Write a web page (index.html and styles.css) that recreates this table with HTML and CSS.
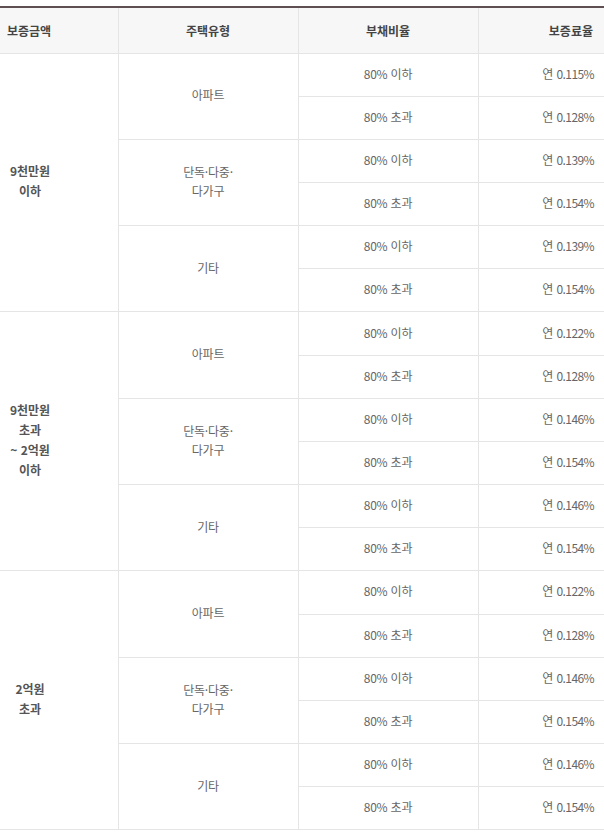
FILE: index.html
```html
<!DOCTYPE html>
<html lang="ko">
<head>
<meta charset="utf-8">
<link rel="stylesheet" href="styles.css">
</head>
<body>
<table class="rate">
  <colgroup>
    <col class="c1"><col class="c2"><col class="c3"><col class="c4">
  </colgroup>
  <thead>
    <tr>
      <th class="left">보증금액</th>
      <th>주택유형</th>
      <th>부채비율</th>
      <th class="right">보증료율</th>
    </tr>
  </thead>
  <tbody>
    <tr>
      <td class="amount" rowspan="6"><span class="amt">9천만원<br>이하</span></td>
      <td class="type" rowspan="2">아파트</td>
      <td>80% 이하</td><td class="right">연 0.115%</td>
    </tr>
    <tr><td>80% 초과</td><td class="right">연 0.128%</td></tr>
    <tr>
      <td class="type" rowspan="2">단독·다중·<br>다가구</td>
      <td>80% 이하</td><td class="right">연 0.139%</td>
    </tr>
    <tr><td>80% 초과</td><td class="right">연 0.154%</td></tr>
    <tr>
      <td class="type" rowspan="2">기타</td>
      <td>80% 이하</td><td class="right">연 0.139%</td>
    </tr>
    <tr><td>80% 초과</td><td class="right">연 0.154%</td></tr>

    <tr>
      <td class="amount" rowspan="6"><span class="amt">9천만원<br>초과<br>~ 2억원<br>이하</span></td>
      <td class="type" rowspan="2">아파트</td>
      <td>80% 이하</td><td class="right">연 0.122%</td>
    </tr>
    <tr><td>80% 초과</td><td class="right">연 0.128%</td></tr>
    <tr>
      <td class="type" rowspan="2">단독·다중·<br>다가구</td>
      <td>80% 이하</td><td class="right">연 0.146%</td>
    </tr>
    <tr><td>80% 초과</td><td class="right">연 0.154%</td></tr>
    <tr>
      <td class="type" rowspan="2">기타</td>
      <td>80% 이하</td><td class="right">연 0.146%</td>
    </tr>
    <tr><td>80% 초과</td><td class="right">연 0.154%</td></tr>

    <tr>
      <td class="amount" rowspan="6"><span class="amt">2억원<br>초과</span></td>
      <td class="type" rowspan="2">아파트</td>
      <td>80% 이하</td><td class="right">연 0.122%</td>
    </tr>
    <tr><td>80% 초과</td><td class="right">연 0.128%</td></tr>
    <tr>
      <td class="type" rowspan="2">단독·다중·<br>다가구</td>
      <td>80% 이하</td><td class="right">연 0.146%</td>
    </tr>
    <tr><td>80% 초과</td><td class="right">연 0.154%</td></tr>
    <tr>
      <td class="type" rowspan="2">기타</td>
      <td>80% 이하</td><td class="right">연 0.146%</td>
    </tr>
    <tr><td>80% 초과</td><td class="right">연 0.154%</td></tr>
  </tbody>
</table>
</body>
</html>
```

FILE: styles.css
```css
html, body {
  margin: 0;
  padding: 0;
  background: #fff;
}
body {
  font-family: "Noto Sans CJK KR", "Noto Sans", sans-serif;
  font-size: 12px;
  color: #666;
}
.rate {
  width: 604px;
  margin-top: 6px;
  border-collapse: collapse;
  table-layout: fixed;
  border-top: 2px solid #5e4f52;
}
.c1 { width: 118px; }
.c2 { width: 180px; }
.c3 { width: 180px; }
.c4 { width: 126px; }

.rate thead tr { height: 46px; }
.rate th {
  padding: 0 10px;
  background: #f7f7f7;
  color: #444;
  font-weight: bold;
  font-size: 12px;
  text-align: center;
  border-bottom: 1px solid #e5e5e5;
  border-left: 1px solid #e5e5e5;
}
.rate th:first-child { border-left: none; }
.rate th.left { text-align: left; padding-left: 7px; }

.rate tbody tr { height: 43.17px; }
.rate td {
  padding: 0 10px 3px;
  text-align: center;
  vertical-align: middle;
  border-bottom: 1px solid #e5e5e5;
  border-left: 1px solid #e5e5e5;
  line-height: 19px;
  letter-spacing: -0.2px;
}
.rate td.amount {
  border-left: none;
  text-align: left;
  padding-left: 9px;
  color: #555;
  font-weight: bold;
  letter-spacing: 0;
}
.amt {
  display: inline-block;
  width: 42px;
  text-align: center;
  line-height: 20px;
  white-space: nowrap;
}
.rate .right { text-align: right; padding-right: 11px; }
.rate td.right { letter-spacing: -0.6px; word-spacing: 1px; padding-right: 10px; }
```
